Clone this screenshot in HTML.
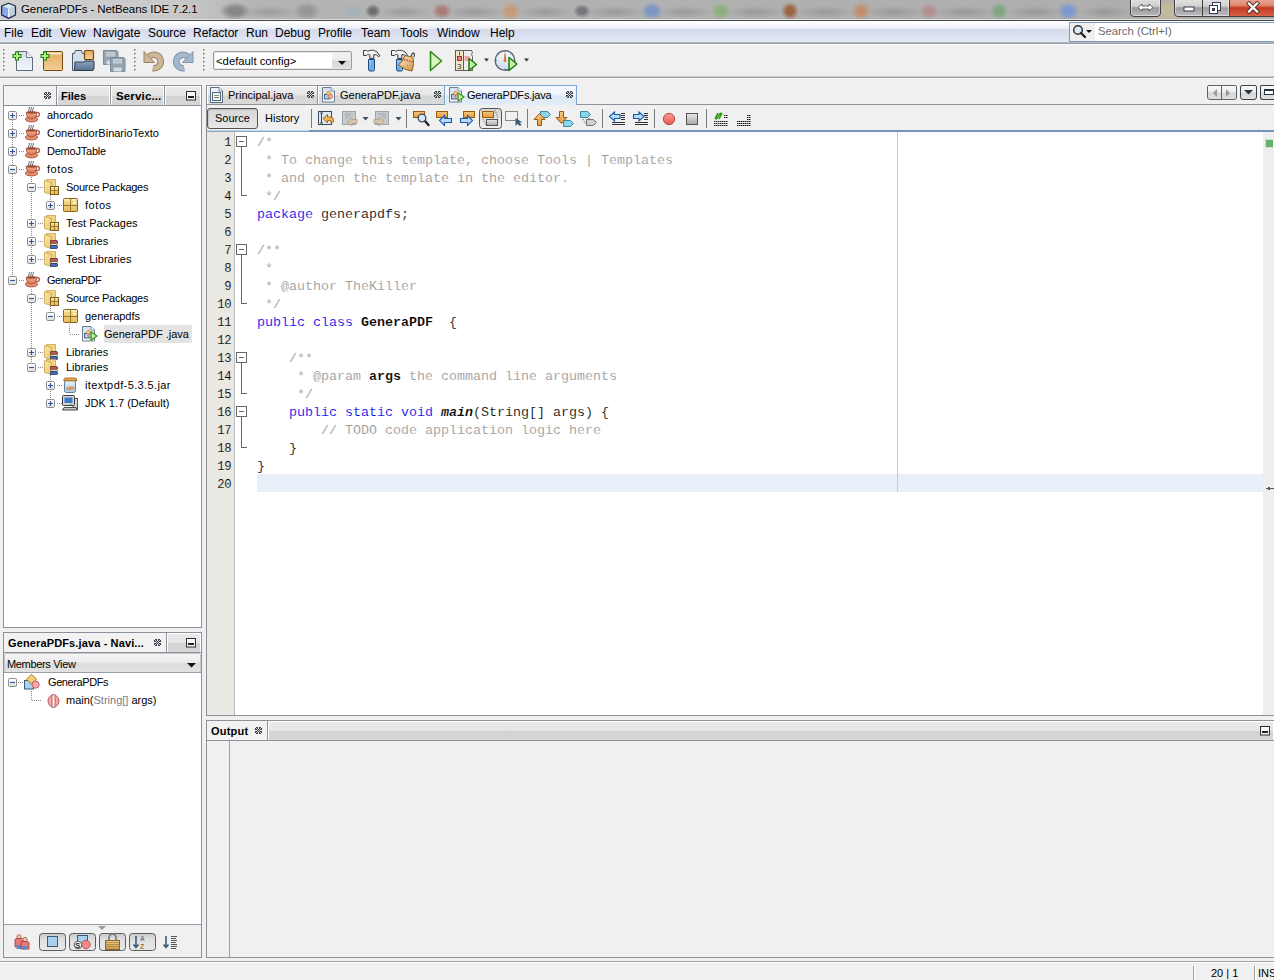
<!DOCTYPE html>
<html><head><meta charset="utf-8">
<style>
*{margin:0;padding:0;box-sizing:border-box}
html,body{width:1274px;height:980px;overflow:hidden;background:#f0f0f0;font-family:"Liberation Sans",sans-serif;font-size:11px;color:#000}
.a{position:absolute}
.t{position:absolute;white-space:nowrap;line-height:1}
#title{left:0;top:0;width:1274px;height:19px;background:radial-gradient(ellipse 16px 9px at 235px 11px,#878787 40%,transparent),radial-gradient(ellipse 14px 9px at 307px 11px,#979797 40%,transparent),radial-gradient(ellipse 12px 8px at 353px 11px,#a6b2ba 40%,transparent),radial-gradient(ellipse 8px 7px at 373px 11px,#6e6e6e 40%,transparent),radial-gradient(ellipse 10px 8px at 442px 11px,#a87e76 40%,transparent),radial-gradient(ellipse 10px 9px at 511px 11px,#c89c78 40%,transparent),radial-gradient(ellipse 9px 7px at 582px 11px,#76767e 40%,transparent),radial-gradient(ellipse 11px 9px at 652px 11px,#7d95c2 40%,transparent),radial-gradient(ellipse 10px 9px at 721px 11px,#8fb07c 40%,transparent),radial-gradient(ellipse 9px 9px at 790px 11px,#9c6444 40%,transparent),radial-gradient(ellipse 10px 9px at 861px 11px,#c09070 40%,transparent),radial-gradient(ellipse 10px 8px at 929px 11px,#b39090 40%,transparent),radial-gradient(ellipse 9px 9px at 999px 11px,#80a880 40%,transparent),radial-gradient(ellipse 11px 9px at 1068px 11px,#7d98d0 40%,transparent),radial-gradient(ellipse 22px 12px at 1167px 11px,#c4b8a0 40%,transparent),radial-gradient(ellipse 30px 6px at 270px 12px,rgba(110,110,110,.35),transparent),radial-gradient(ellipse 25px 6px at 405px 12px,rgba(110,110,110,.35),transparent),radial-gradient(ellipse 30px 6px at 475px 12px,rgba(110,110,110,.35),transparent),radial-gradient(ellipse 28px 6px at 545px 12px,rgba(110,110,110,.35),transparent),radial-gradient(ellipse 30px 6px at 615px 12px,rgba(110,110,110,.35),transparent),radial-gradient(ellipse 28px 6px at 685px 12px,rgba(110,110,110,.35),transparent),radial-gradient(ellipse 30px 6px at 755px 12px,rgba(110,110,110,.35),transparent),radial-gradient(ellipse 30px 6px at 825px 12px,rgba(110,110,110,.35),transparent),radial-gradient(ellipse 30px 6px at 895px 12px,rgba(110,110,110,.35),transparent),radial-gradient(ellipse 30px 6px at 965px 12px,rgba(110,110,110,.35),transparent),radial-gradient(ellipse 28px 6px at 1035px 12px,rgba(110,110,110,.35),transparent),radial-gradient(ellipse 25px 6px at 1105px 12px,rgba(110,110,110,.35),transparent),linear-gradient(90deg,#d0d0d0 0%,#c8c8c8 14%,#b4b4b4 20%,#b0b0b0 60%,#aeaeae 85%,#b2aea8 100%)}
#menubar{left:0;top:21px;width:1274px;height:21px;background:linear-gradient(#ffffff 0px,#fafbfd 3px,#e9ecf6 8px,#d5dbed 8px,#dae0f0 14px,#e3e8f6 21px)}
.mi{position:absolute;top:26px;font-size:12px;line-height:14px;white-space:nowrap}
.border{position:absolute;border:1px solid #8c919c}
.tabg{background:linear-gradient(#ebebeb 0px,#e4e4e4 10px,#d3d3d3 10px,#d6d6d6 19px);box-shadow:inset 1px 1px 0 #fff,inset -1px 0 0 #fff}
.code{position:absolute;font-family:"Liberation Mono",monospace;font-size:13.33px;line-height:18px;white-space:pre;-webkit-text-stroke:0.15px #fff}
.ln{position:absolute;font-family:"Liberation Mono",monospace;font-size:12.2px;letter-spacing:-0.32px;line-height:18px;text-align:right;width:24.3px;left:207px;-webkit-text-stroke:0.12px #e9e8e2}
.cm{color:#969696}
.kw{color:#0000e6}
.tree{position:absolute;font-size:11px;line-height:13px;white-space:nowrap}
</style></head><body>
<svg width="0" height="0" style="position:absolute">
<defs>
<linearGradient id="gCup" x1="0" y1="0" x2="0" y2="1"><stop offset="0" stop-color="#f6b49a"/><stop offset="1" stop-color="#d9704f"/></linearGradient>
<linearGradient id="gFold" x1="0" y1="0" x2="1" y2="1"><stop offset="0" stop-color="#fbe9a6"/><stop offset="1" stop-color="#e9c66e"/></linearGradient>
<linearGradient id="gPkg" x1="0" y1="0" x2="0" y2="1"><stop offset="0" stop-color="#f7dc92"/><stop offset="1" stop-color="#e6bd5c"/></linearGradient>
<linearGradient id="gPage" x1="0" y1="0" x2="0" y2="1"><stop offset="0" stop-color="#d3deea"/><stop offset="1" stop-color="#f6f9fc"/></linearGradient>
<linearGradient id="gExp" x1="0" y1="0" x2="0" y2="1"><stop offset="0" stop-color="#ffffff"/><stop offset="0.5" stop-color="#f4f4f4"/><stop offset="1" stop-color="#dcdcdc"/></linearGradient>
<linearGradient id="gJar" x1="0" y1="0" x2="0" y2="1"><stop offset="0" stop-color="#eaf3fb"/><stop offset="1" stop-color="#a9c6e4"/></linearGradient>
<symbol id="cup" viewBox="0 0 16 16">
 <path d="M3.8 6q-0.8-1.5 0-3t0.4-3M5.8 6q-0.8-1.5 0-3t0.4-3M7.8 5.5q-0.8-1.5 0-3t0.6-2.5" stroke="#6a6a6a" stroke-width="1" fill="none"/>
 <ellipse cx="6.5" cy="12.3" rx="6.2" ry="2.6" fill="#e7906f" stroke="#a4533a" stroke-width="0.9"/>
 <circle cx="12.3" cy="7.6" r="2.1" fill="none" stroke="#b45d40" stroke-width="1.3"/>
 <path d="M1.2 5.2 Q1.5 11.8 6.5 12 Q11.5 11.8 11.8 5.2 Z" fill="url(#gCup)" stroke="#a4533a" stroke-width="0.9"/>
 <ellipse cx="6.5" cy="5.5" rx="4.8" ry="1.3" fill="#9e4f36"/>
</symbol>
<symbol id="fpkg" viewBox="0 0 16 16">
 <path d="M2.5 0.5h9v12h-9z" fill="#f0d482" stroke="#c9a24e" stroke-width="0.8"/>
 <path d="M0.5 1.5l7 2v12l-7-2z" fill="url(#gFold)" stroke="#c9a24e" stroke-width="0.8"/>
 <rect x="6.5" y="7.5" width="8" height="8" fill="url(#gPkg)" stroke="#7d6020" stroke-width="1"/>
 <path d="M10.5 7.5v8M6.5 11.5h8" stroke="#8a6a24" stroke-width="0.8"/>
 <path d="M7.5 8.5h2M11.5 8.5h2" stroke="#fff3c8" stroke-width="1"/>
</symbol>
<symbol id="flib" viewBox="0 0 16 16">
 <path d="M2.5 0.5h9v12h-9z" fill="#f0d482" stroke="#c9a24e" stroke-width="0.8"/>
 <path d="M0.5 1.5l7 2v12l-7-2z" fill="url(#gFold)" stroke="#c9a24e" stroke-width="0.8"/>
 <path d="M6.5 7.5h6.5q1.5 1.5 0 3h-6.5z" fill="#b65a5a" stroke="#6c2a2a" stroke-width="0.8"/>
 <path d="M7 10.5h6q1 1 0 2h-6z" fill="#efe3c2" stroke="#6b5a2a" stroke-width="0.7"/>
 <path d="M6.5 12.5h6.5q1.5 1.5 0 3h-6.5z" fill="#4a6cb4" stroke="#23386c" stroke-width="0.8"/>
</symbol>
<symbol id="pkg" viewBox="0 0 16 16">
 <rect x="0.5" y="1.5" width="14" height="13" rx="1" fill="url(#gPkg)" stroke="#84661f" stroke-width="1"/>
 <path d="M7.5 1.5v13M0.5 8.5h14" stroke="#8f7128" stroke-width="0.9"/>
 <path d="M1.5 2.8h5M8.5 2.8h5" stroke="#fff6d6" stroke-width="1.3"/>
 <rect x="10" y="5" width="3" height="1.6" fill="#fff8e0"/>
</symbol>
<symbol id="exp" viewBox="0 0 9 9">
 <rect x="0.5" y="0.5" width="8" height="8" rx="1.2" fill="url(#gExp)" stroke="#8c8c8c" stroke-width="1"/>
 <path d="M2 4.5h5" stroke="#3553a0" stroke-width="1.2"/>
</symbol>
<symbol id="expp" viewBox="0 0 9 9">
 <rect x="0.5" y="0.5" width="8" height="8" rx="1.2" fill="url(#gExp)" stroke="#8c8c8c" stroke-width="1"/>
 <path d="M2 4.5h5M4.5 2v5" stroke="#3553a0" stroke-width="1.2"/>
</symbol>
<symbol id="jfile" viewBox="0 0 16 16">
 <path d="M0.5 0.5h8.5l3.5 3.5v11h-12z" fill="url(#gPage)" stroke="#6e7e90" stroke-width="1"/>
 <path d="M9 0.5v3.5h3.5" fill="#fff" stroke="#6e7e90" stroke-width="0.8"/>
 <rect x="2.5" y="7.5" width="5" height="4.5" fill="#a8d0f0" stroke="#3e5f80" stroke-width="0.9"/>
 <path d="M6.5 4l2.5 2.5-2.5 2.5-2.5-2.5z" fill="#f3c878" stroke="#b8780c" stroke-width="0.8"/>
 <circle cx="8.3" cy="9.5" r="2.2" fill="#f6a8a8" stroke="#b55858" stroke-width="0.7"/>
</symbol>
<symbol id="run" viewBox="0 0 8 10">
 <path d="M1 0.8l6 4.2-6 4.2z" fill="#bff0a8" stroke="#3a9a20" stroke-width="1.3" stroke-linejoin="round"/>
</symbol>
<symbol id="close" viewBox="0 0 7 7" shape-rendering="crispEdges"><rect x="1" y="0" width="1" height="1" fill="#3c414a"/><rect x="2" y="0" width="1" height="1" fill="#3c414a"/><rect x="4" y="0" width="1" height="1" fill="#3c414a"/><rect x="5" y="0" width="1" height="1" fill="#3c414a"/><rect x="0" y="1" width="1" height="1" fill="#3c414a"/><rect x="2" y="1" width="1" height="1" fill="#3c414a"/><rect x="4" y="1" width="1" height="1" fill="#3c414a"/><rect x="6" y="1" width="1" height="1" fill="#3c414a"/><rect x="0" y="2" width="1" height="1" fill="#3c414a"/><rect x="1" y="2" width="1" height="1" fill="#3c414a"/><rect x="3" y="2" width="1" height="1" fill="#3c414a"/><rect x="5" y="2" width="1" height="1" fill="#3c414a"/><rect x="6" y="2" width="1" height="1" fill="#3c414a"/><rect x="2" y="3" width="1" height="1" fill="#3c414a"/><rect x="4" y="3" width="1" height="1" fill="#3c414a"/><rect x="0" y="4" width="1" height="1" fill="#3c414a"/><rect x="1" y="4" width="1" height="1" fill="#3c414a"/><rect x="3" y="4" width="1" height="1" fill="#3c414a"/><rect x="5" y="4" width="1" height="1" fill="#3c414a"/><rect x="6" y="4" width="1" height="1" fill="#3c414a"/><rect x="0" y="5" width="1" height="1" fill="#3c414a"/><rect x="2" y="5" width="1" height="1" fill="#3c414a"/><rect x="4" y="5" width="1" height="1" fill="#3c414a"/><rect x="6" y="5" width="1" height="1" fill="#3c414a"/><rect x="1" y="6" width="1" height="1" fill="#3c414a"/><rect x="2" y="6" width="1" height="1" fill="#3c414a"/><rect x="4" y="6" width="1" height="1" fill="#3c414a"/><rect x="5" y="6" width="1" height="1" fill="#3c414a"/><rect x="1" y="1" width="1" height="1" fill="#c4c9ce"/><rect x="5" y="1" width="1" height="1" fill="#c4c9ce"/><rect x="2" y="2" width="1" height="1" fill="#c4c9ce"/><rect x="4" y="2" width="1" height="1" fill="#c4c9ce"/><rect x="3" y="3" width="1" height="1" fill="#c4c9ce"/><rect x="2" y="4" width="1" height="1" fill="#c4c9ce"/><rect x="4" y="4" width="1" height="1" fill="#c4c9ce"/><rect x="1" y="5" width="1" height="1" fill="#c4c9ce"/><rect x="5" y="5" width="1" height="1" fill="#c4c9ce"/></symbol>
<symbol id="mini" viewBox="0 0 10 10"><rect x="0.5" y="0.5" width="9" height="8.5" fill="#f6f6f6" stroke="#2f2f2f" stroke-width="1"/><rect x="2" y="5" width="6" height="2" fill="#222"/></symbol>
</defs></svg>
<svg width="0" height="0" style="position:absolute"><defs>
<symbol id="jar" viewBox="0 0 16 16">
 <rect x="1.5" y="3.5" width="11" height="12" rx="2" fill="url(#gJar)" stroke="#5a7aa4" stroke-width="1"/>
 <path d="M0.8 3.8q0-2.8 2-2.8h9q2 0 2 2.8z" fill="#e8a850" stroke="#9a6420" stroke-width="0.9"/>
 <ellipse cx="5.5" cy="11.5" rx="2" ry="1.3" fill="#f0a868" stroke="#c07030" stroke-width="0.6"/>
 <ellipse cx="9" cy="11" rx="2" ry="1.3" fill="#f0a868" stroke="#c07030" stroke-width="0.6"/>
</symbol>
<symbol id="jdk" viewBox="0 0 16 16">
 <rect x="11" y="3.5" width="4.5" height="11" fill="#d8d8d8" stroke="#444" stroke-width="0.9"/>
 <rect x="0.5" y="0.5" width="12" height="10" rx="1" fill="#d6d6d6" stroke="#3a3a3a" stroke-width="1"/>
 <rect x="2.5" y="2.5" width="8" height="5.5" fill="#3a78c8"/>
 <rect x="8" y="9" width="1.5" height="1.2" fill="#2ac02a"/>
 <path d="M2 12.5h12l1.5 2.5h-15z" fill="#c8c8c8" stroke="#3a3a3a" stroke-width="0.9"/>
</symbol>
</defs></svg>

<!-- title bar -->
<div id="title" class="a"></div>
<div class="a" style="left:0;top:19px;width:1274px;height:1px;background:#dedede"></div>
<div class="a" style="left:0;top:20px;width:1274px;height:1px;background:#474747"></div>
<div class="t" style="left:21px;top:4px;font-size:11.5px;color:#000;letter-spacing:-0.08px;text-shadow:0 0 5px rgba(255,255,255,.5)">GeneraPDFs - NetBeans IDE 7.2.1</div>

<!-- menubar -->
<div id="menubar" class="a"></div>
<div class="a" style="left:0;top:42px;width:1274px;height:1px;background:#b4b8c4"></div>
<div class="a" style="left:0;top:43px;width:1274px;height:1px;background:#9c9ea4"></div>
<div class="a" style="left:0;top:44px;width:1274px;height:1px;background:#fdfdfd"></div>
<span class="mi" style="left:4px">File</span>
<span class="mi" style="left:31px">Edit</span>
<span class="mi" style="left:60px">View</span>
<span class="mi" style="left:93px">Navigate</span>
<span class="mi" style="left:148px">Source</span>
<span class="mi" style="left:193px">Refactor</span>
<span class="mi" style="left:246px">Run</span>
<span class="mi" style="left:275px">Debug</span>
<span class="mi" style="left:318px">Profile</span>
<span class="mi" style="left:361px">Team</span>
<span class="mi" style="left:400px">Tools</span>
<span class="mi" style="left:437px">Window</span>
<span class="mi" style="left:490px">Help</span>

<!-- toolbar -->
<div class="a" style="left:0;top:76px;width:1274px;height:1px;background:#cbcbcb"></div>
<div class="a" style="left:0;top:77px;width:1274px;height:1px;background:#a3a3a3"></div>
<div class="a" style="left:0;top:78px;width:1274px;height:1px;background:#f7f7f7"></div>

<!-- projects panel -->
<div class="border" style="left:3px;top:85px;width:199px;height:543px;background:#fff"></div>
<div class="a" style="left:4px;top:86px;width:52px;height:19px;background:#f2f2f2"></div>
<div class="a tabg" style="left:57px;top:86px;width:53px;height:19px"></div>
<div class="a tabg" style="left:111px;top:86px;width:53px;height:19px"></div>
<div class="a tabg" style="left:165px;top:86px;width:36px;height:19px"></div>
<div class="a" style="left:56px;top:86px;width:1px;height:19px;background:#8c919c"></div>
<div class="a" style="left:110px;top:86px;width:1px;height:19px;background:#8c919c"></div>
<div class="a" style="left:164px;top:86px;width:1px;height:19px;background:#8c919c"></div>
<div class="a" style="left:4px;top:105px;width:197px;height:1px;background:#8c919c"></div>
<div class="t" style="left:61px;top:91px;font-size:11px;font-weight:bold">Files</div>
<div class="t" style="left:116px;top:91px;font-size:11.5px;font-weight:bold;letter-spacing:0.15px">Servic...</div>

<div class="a" style="left:12px;top:120px;width:1px;height:156px;background:repeating-linear-gradient(180deg,#8a8a8a 0 1px,transparent 1px 2px)"></div>
<div class="a" style="left:31px;top:177px;width:1px;height:78px;background:repeating-linear-gradient(180deg,#8a8a8a 0 1px,transparent 1px 2px)"></div>
<div class="a" style="left:50px;top:195px;width:1px;height:6px;background:repeating-linear-gradient(180deg,#8a8a8a 0 1px,transparent 1px 2px)"></div>
<div class="a" style="left:31px;top:289px;width:1px;height:74px;background:repeating-linear-gradient(180deg,#8a8a8a 0 1px,transparent 1px 2px)"></div>
<div class="a" style="left:50px;top:306px;width:1px;height:6px;background:repeating-linear-gradient(180deg,#8a8a8a 0 1px,transparent 1px 2px)"></div>
<div class="a" style="left:69px;top:324px;width:1px;height:10px;background:repeating-linear-gradient(180deg,#8a8a8a 0 1px,transparent 1px 2px)"></div>
<div class="a" style="left:70px;top:334px;width:10px;height:1px;background:repeating-linear-gradient(90deg,#8a8a8a 0 1px,transparent 1px 2px)"></div>
<div class="a" style="left:50px;top:375px;width:1px;height:24px;background:repeating-linear-gradient(180deg,#8a8a8a 0 1px,transparent 1px 2px)"></div>
<div class="a" style="left:104px;top:325px;width:88px;height:18px;background:#e3e3e3"></div>
<svg class="a" style="left:8px;top:111px" width="9" height="9"><use href="#expp"/></svg>
<div class="a" style="left:19px;top:115px;width:5px;height:1px;background:repeating-linear-gradient(90deg,#8a8a8a 0 1px,transparent 1px 2px)"></div>
<svg class="a" style="left:25px;top:107px" width="16" height="16"><use href="#cup"/></svg>
<div class="t" style="left:47px;top:110px;font-size:11px;letter-spacing:0px">ahorcado</div>
<svg class="a" style="left:8px;top:129px" width="9" height="9"><use href="#expp"/></svg>
<div class="a" style="left:19px;top:133px;width:5px;height:1px;background:repeating-linear-gradient(90deg,#8a8a8a 0 1px,transparent 1px 2px)"></div>
<svg class="a" style="left:25px;top:125px" width="16" height="16"><use href="#cup"/></svg>
<div class="t" style="left:47px;top:128px;font-size:11px;letter-spacing:0px">ConertidorBinarioTexto</div>
<svg class="a" style="left:8px;top:147px" width="9" height="9"><use href="#expp"/></svg>
<div class="a" style="left:19px;top:151px;width:5px;height:1px;background:repeating-linear-gradient(90deg,#8a8a8a 0 1px,transparent 1px 2px)"></div>
<svg class="a" style="left:25px;top:143px" width="16" height="16"><use href="#cup"/></svg>
<div class="t" style="left:47px;top:146px;font-size:11px;letter-spacing:-0.22px">DemoJTable</div>
<svg class="a" style="left:8px;top:165px" width="9" height="9"><use href="#exp"/></svg>
<div class="a" style="left:19px;top:169px;width:5px;height:1px;background:repeating-linear-gradient(90deg,#8a8a8a 0 1px,transparent 1px 2px)"></div>
<svg class="a" style="left:25px;top:161px" width="16" height="16"><use href="#cup"/></svg>
<div class="t" style="left:47px;top:164px;font-size:11px;letter-spacing:0.55px">fotos</div>
<svg class="a" style="left:27px;top:183px" width="9" height="9"><use href="#exp"/></svg>
<div class="a" style="left:38px;top:187px;width:5px;height:1px;background:repeating-linear-gradient(90deg,#8a8a8a 0 1px,transparent 1px 2px)"></div>
<svg class="a" style="left:44px;top:179px" width="16" height="16"><use href="#fpkg"/></svg>
<div class="t" style="left:66px;top:182px;font-size:11px;letter-spacing:-0.27px">Source Packages</div>
<svg class="a" style="left:46px;top:201px" width="9" height="9"><use href="#expp"/></svg>
<div class="a" style="left:57px;top:205px;width:5px;height:1px;background:repeating-linear-gradient(90deg,#8a8a8a 0 1px,transparent 1px 2px)"></div>
<svg class="a" style="left:63px;top:197px" width="16" height="16"><use href="#pkg"/></svg>
<div class="t" style="left:85px;top:200px;font-size:11px;letter-spacing:0.55px">fotos</div>
<svg class="a" style="left:27px;top:219px" width="9" height="9"><use href="#expp"/></svg>
<div class="a" style="left:38px;top:223px;width:5px;height:1px;background:repeating-linear-gradient(90deg,#8a8a8a 0 1px,transparent 1px 2px)"></div>
<svg class="a" style="left:44px;top:215px" width="16" height="16"><use href="#fpkg"/></svg>
<div class="t" style="left:66px;top:218px;font-size:11px;letter-spacing:0px">Test Packages</div>
<svg class="a" style="left:27px;top:237px" width="9" height="9"><use href="#expp"/></svg>
<div class="a" style="left:38px;top:241px;width:5px;height:1px;background:repeating-linear-gradient(90deg,#8a8a8a 0 1px,transparent 1px 2px)"></div>
<svg class="a" style="left:44px;top:233px" width="16" height="16"><use href="#flib"/></svg>
<div class="t" style="left:66px;top:236px;font-size:11px;letter-spacing:0px">Libraries</div>
<svg class="a" style="left:27px;top:255px" width="9" height="9"><use href="#expp"/></svg>
<div class="a" style="left:38px;top:259px;width:5px;height:1px;background:repeating-linear-gradient(90deg,#8a8a8a 0 1px,transparent 1px 2px)"></div>
<svg class="a" style="left:44px;top:251px" width="16" height="16"><use href="#flib"/></svg>
<div class="t" style="left:66px;top:254px;font-size:11px;letter-spacing:0px">Test Libraries</div>
<svg class="a" style="left:8px;top:276px" width="9" height="9"><use href="#exp"/></svg>
<div class="a" style="left:19px;top:280px;width:5px;height:1px;background:repeating-linear-gradient(90deg,#8a8a8a 0 1px,transparent 1px 2px)"></div>
<svg class="a" style="left:25px;top:272px" width="16" height="16"><use href="#cup"/></svg>
<div class="t" style="left:47px;top:275px;font-size:11px;letter-spacing:-0.5px">GeneraPDF</div>
<svg class="a" style="left:27px;top:294px" width="9" height="9"><use href="#exp"/></svg>
<div class="a" style="left:38px;top:298px;width:5px;height:1px;background:repeating-linear-gradient(90deg,#8a8a8a 0 1px,transparent 1px 2px)"></div>
<svg class="a" style="left:44px;top:290px" width="16" height="16"><use href="#fpkg"/></svg>
<div class="t" style="left:66px;top:293px;font-size:11px;letter-spacing:-0.27px">Source Packages</div>
<svg class="a" style="left:46px;top:312px" width="9" height="9"><use href="#exp"/></svg>
<div class="a" style="left:57px;top:316px;width:5px;height:1px;background:repeating-linear-gradient(90deg,#8a8a8a 0 1px,transparent 1px 2px)"></div>
<svg class="a" style="left:63px;top:308px" width="16" height="16"><use href="#pkg"/></svg>
<div class="t" style="left:85px;top:311px;font-size:11px;letter-spacing:0px">generapdfs</div>
<svg class="a" style="left:82px;top:326px" width="16" height="16"><use href="#jfile"/></svg>
<svg class="a" style="left:90px;top:331px" width="8" height="10"><use href="#run"/></svg>
<div class="t" style="left:104px;top:329px;font-size:11px;letter-spacing:0px">GeneraPDF .java</div>
<svg class="a" style="left:27px;top:348px" width="9" height="9"><use href="#expp"/></svg>
<div class="a" style="left:38px;top:352px;width:5px;height:1px;background:repeating-linear-gradient(90deg,#8a8a8a 0 1px,transparent 1px 2px)"></div>
<svg class="a" style="left:44px;top:344px" width="16" height="16"><use href="#flib"/></svg>
<div class="t" style="left:66px;top:347px;font-size:11px;letter-spacing:0px">Libraries</div>
<svg class="a" style="left:27px;top:363px" width="9" height="9"><use href="#exp"/></svg>
<div class="a" style="left:38px;top:367px;width:5px;height:1px;background:repeating-linear-gradient(90deg,#8a8a8a 0 1px,transparent 1px 2px)"></div>
<svg class="a" style="left:44px;top:359px" width="16" height="16"><use href="#flib"/></svg>
<div class="t" style="left:66px;top:362px;font-size:11px;letter-spacing:0px">Libraries</div>
<svg class="a" style="left:46px;top:381px" width="9" height="9"><use href="#expp"/></svg>
<div class="a" style="left:57px;top:385px;width:5px;height:1px;background:repeating-linear-gradient(90deg,#8a8a8a 0 1px,transparent 1px 2px)"></div>
<svg class="a" style="left:63px;top:377px" width="16" height="16"><use href="#jar"/></svg>
<div class="t" style="left:85px;top:380px;font-size:11px;letter-spacing:0.39px">itextpdf-5.3.5.jar</div>
<svg class="a" style="left:46px;top:399px" width="9" height="9"><use href="#expp"/></svg>
<div class="a" style="left:57px;top:403px;width:5px;height:1px;background:repeating-linear-gradient(90deg,#8a8a8a 0 1px,transparent 1px 2px)"></div>
<svg class="a" style="left:62px;top:395px" width="16" height="16"><use href="#jdk"/></svg>
<div class="t" style="left:85px;top:398px;font-size:11px;letter-spacing:0px">JDK 1.7 (Default)</div>
<!-- navigator panel -->
<div class="border" style="left:3px;top:632px;width:199px;height:326px;background:#fff"></div>
<div class="a" style="left:4px;top:633px;width:162px;height:19px;background:#f2f2f2"></div>
<div class="a tabg" style="left:167px;top:633px;width:34px;height:19px"></div>
<div class="a" style="left:166px;top:633px;width:1px;height:19px;background:#8c919c"></div>
<div class="a" style="left:4px;top:652px;width:197px;height:1px;background:#8c919c"></div>
<div class="t" style="left:8px;top:638px;font-size:11px;font-weight:bold;letter-spacing:0.13px">GeneraPDFs.java - Navi...</div>
<div class="a" style="left:4px;top:653px;width:197px;height:20px;border:1px solid #c8c8c8;border-radius:2px;background:linear-gradient(#f4f4f4 0%,#ececec 45%,#dcdcdc 55%,#e2e2e2 100%)"></div>
<div class="a" style="left:4px;top:672px;width:197px;height:1px;background:#9a9ea8"></div>
<div class="t" style="left:7px;top:659px;font-size:11px;letter-spacing:-0.33px">Members View</div>
<div class="a" style="left:4px;top:924px;width:197px;height:1px;background:#9a9ea8"></div>
<div class="a" style="left:4px;top:925px;width:197px;height:32px;background:#f0f0f0"></div>

<!-- editor -->
<div class="border" style="left:206px;top:85px;width:1070px;height:631px;background:#f0f0f0;border-top-color:transparent"></div>
<div class="a" style="left:207px;top:104px;width:1067px;height:1px;background:#8c919c"></div>
<div class="a" style="left:309px;top:130px;width:965px;height:2px;background:#7394b8"></div><div class="a" style="left:207px;top:130px;width:102px;height:1px;background:#c8d6e6"></div><div class="a" style="left:207px;top:131px;width:102px;height:1px;background:#86a6c8"></div>
<div class="a" style="left:207px;top:132px;width:27px;height:583px;background:#e9e8e2"></div>
<div class="a" style="left:234px;top:132px;width:1px;height:583px;background:#bababa"></div>
<div class="a" style="left:235px;top:132px;width:1028px;height:583px;background:#fff"></div>
<div class="a" style="left:1263px;top:132px;width:11px;height:583px;background:#eeeeee"></div>
<div class="a" style="left:257px;top:474px;width:1006px;height:18px;background:#e9eff8"></div>
<div class="a" style="left:897px;top:132px;width:1px;height:360px;background:#ffb4b4"></div>
<div class="a" style="left:1265px;top:139px;width:9px;height:9px;background:#fff;border:1px solid #e0d8d0;border-right:none"></div><div class="a" style="left:1266px;top:140px;width:7px;height:7px;background:#63b468"></div>

<div class="code" style="left:257px;top:134px"><span class="cm">/*</span>
<span class="cm"> * To change this template, choose Tools | Templates</span>
<span class="cm"> * and open the template in the editor.</span>
<span class="cm"> */</span>
<span class="kw">package</span> generapdfs;

<span class="cm">/**</span>
<span class="cm"> *</span>
<span class="cm"> * @author TheKiller</span>
<span class="cm"> */</span>
<span class="kw">public</span> <span class="kw">class</span> <b>GeneraPDF</b>  {

<span class="cm">    /**</span>
<span class="cm">     * @param </span><b>args</b><span class="cm"> the command line arguments</span>
<span class="cm">     */</span>
    <span class="kw">public</span> <span class="kw">static</span> <span class="kw">void</span> <b><i>main</i></b>(String[] args) {
<span class="cm">        // TODO code application logic here</span>
    }
}
</div>
<div class="ln" style="top:134px">1<br>2<br>3<br>4<br>5<br>6<br>7<br>8<br>9<br>10<br>11<br>12<br>13<br>14<br>15<br>16<br>17<br>18<br>19<br>20</div>
<div class="a" style="left:236px;top:136px;width:11px;height:11px;border:1px solid #666;background:#fff"></div><div class="a" style="left:239px;top:141px;width:5px;height:1px;background:#666"></div><div class="a" style="left:241px;top:147px;width:1px;height:49px;background:#666"></div><div class="a" style="left:241px;top:195px;width:6px;height:1px;background:#666"></div>
<div class="a" style="left:236px;top:244px;width:11px;height:11px;border:1px solid #666;background:#fff"></div><div class="a" style="left:239px;top:249px;width:5px;height:1px;background:#666"></div><div class="a" style="left:241px;top:255px;width:1px;height:49px;background:#666"></div><div class="a" style="left:241px;top:303px;width:6px;height:1px;background:#666"></div>
<div class="a" style="left:236px;top:352px;width:11px;height:11px;border:1px solid #666;background:#fff"></div><div class="a" style="left:239px;top:357px;width:5px;height:1px;background:#666"></div><div class="a" style="left:241px;top:363px;width:1px;height:31px;background:#666"></div><div class="a" style="left:241px;top:393px;width:6px;height:1px;background:#666"></div>
<div class="a" style="left:236px;top:406px;width:11px;height:11px;border:1px solid #666;background:#fff"></div><div class="a" style="left:239px;top:411px;width:5px;height:1px;background:#666"></div><div class="a" style="left:241px;top:417px;width:1px;height:31px;background:#666"></div><div class="a" style="left:241px;top:447px;width:6px;height:1px;background:#666"></div>
<!-- editor tabs -->
<div class="a" style="left:206px;top:85px;width:1px;height:1px;background:#8c919c"></div><div class="a" style="left:207px;top:85px;width:237px;height:1px;background:#8c919c"></div>
<div class="a" style="left:207px;top:86px;width:110px;height:18px;background:linear-gradient(#eeeeee 0%,#e6e6e6 45%,#d6d6d6 55%,#dadada 100%);border-top:1px solid #fff;border-left:1px solid #fff"></div>
<div class="a" style="left:317px;top:86px;width:1px;height:18px;background:#8c919c"></div>
<div class="a" style="left:318px;top:86px;width:126px;height:18px;background:linear-gradient(#eeeeee 0%,#e6e6e6 45%,#d6d6d6 55%,#dadada 100%);border-top:1px solid #fff;border-left:1px solid #fff"></div>
<div class="a" style="left:444px;top:85px;width:133px;height:20px;border:1px solid #7ea4d1;border-bottom:none;background:linear-gradient(#f6f9fd 0%,#eef4fa 45%,#dce9f6 55%,#e2edf8 100%)"></div>
<div class="t" style="left:228px;top:90px;font-size:11px">Principal.java</div>
<div class="t" style="left:340px;top:90px;font-size:11px">GeneraPDF.java</div>
<div class="t" style="left:467px;top:90px;font-size:11px;letter-spacing:-0.2px">GeneraPDFs.java</div>
<!-- editor toolbar -->
<div class="a" style="left:207px;top:108px;width:51px;height:21px;border:1px solid #555;border-radius:3px;background:linear-gradient(#d6d6d6,#e8e8e8);box-shadow:inset 1px 1px 1px rgba(0,0,0,.12)"></div>
<div class="t" style="left:215px;top:113px;font-size:11px">Source</div>
<div class="t" style="left:265px;top:113px;font-size:11px">History</div>
<!-- output -->
<div class="border" style="left:206px;top:720px;width:1070px;height:238px;background:#f0f0f0"></div>
<div class="a" style="left:207px;top:721px;width:60px;height:19px;background:#f2f2f2"></div>
<div class="a tabg" style="left:268px;top:721px;width:1006px;height:19px"></div>
<div class="a" style="left:267px;top:721px;width:1px;height:19px;background:#8c919c"></div>
<div class="a" style="left:207px;top:740px;width:1067px;height:1px;background:#8c919c"></div>
<div class="a" style="left:229px;top:741px;width:1px;height:216px;background:#a0a0a0"></div>
<div class="t" style="left:211px;top:726px;font-size:11px;font-weight:bold;letter-spacing:0.2px">Output</div>

<!-- status bar -->
<div class="a" style="left:0;top:961px;width:1274px;height:1px;background:#a0a0a0"></div>
<div class="a" style="left:0;top:962px;width:1274px;height:1px;background:#fff"></div>
<!-- title icon -->
<svg class="a" style="left:0;top:1px" width="18" height="18" viewBox="0 0 18 18">
 <path d="M8.6 7.6L15.5 5L8.6 2.3L1.6 5Z" fill="#d4ece8"/>
 <path d="M1.6 5L8.6 7.6V17.4L1.6 14Z" fill="#8aa6e6"/>
 <path d="M8.6 7.6L15.5 5V14L8.6 17.4Z" fill="#c0d0d8"/>
 <path d="M8.6 7.6V17.4" stroke="#eaf6ff" stroke-width="1.2"/>
 <path d="M8.6 2.3L15.5 5V14L8.6 17.4L1.6 14V5Z" fill="none" stroke="#1c2250" stroke-width="1.2" stroke-linejoin="round"/>
</svg>
<!-- window buttons -->
<div class="a" style="left:1130px;top:-3px;width:31px;height:20px;border:1px solid #404040;border-radius:0 0 4px 4px;background:linear-gradient(#e2e2e2 0%,#cfcfcf 45%,#9a9a9a 55%,#b8b8b8 100%);box-shadow:inset 0 0 0 1px rgba(255,255,255,.45)"></div>
<svg class="a" style="left:1137px;top:3px" width="17" height="9" viewBox="0 0 17 9"><path d="M1 4.5L5 1V3H12V1L16 4.5L12 8V6H5V8Z" fill="#fff" stroke="#444" stroke-width="0.8"/></svg>
<div class="a" style="left:1174px;top:-3px;width:56px;height:20px;border:1px solid #404040;border-radius:0 0 0 4px;background:linear-gradient(#e4e4e4 0%,#d2d2d2 45%,#9e9e9e 55%,#bdbdbd 100%);box-shadow:inset 0 0 0 1px rgba(255,255,255,.45)"></div>
<div class="a" style="left:1202px;top:0;width:1px;height:16px;background:#404040"></div>
<div class="a" style="left:1229px;top:-3px;width:46px;height:20px;border:1px solid #404040;border-right:none;background:linear-gradient(#eaa898 0%,#e08a72 40%,#c43a22 55%,#d86048 100%)"></div>
<svg class="a" style="left:1183px;top:6px" width="12" height="6"><rect x="1" y="1" width="10" height="4" fill="#fff" stroke="#3a3a50" stroke-width="1"/></svg>
<svg class="a" style="left:1208px;top:1px" width="14" height="14"><rect x="4.5" y="1.5" width="8" height="8" fill="#fff" stroke="#3a3a50" stroke-width="1"/><rect x="1.5" y="4.5" width="8" height="8" fill="#fff" stroke="#3a3a50" stroke-width="1"/><rect x="4" y="7" width="3" height="3" fill="#3a3a50"/></svg>
<svg class="a" style="left:1246px;top:1px" width="14" height="13"><path d="M3 2.5L11 10.5M11 2.5L3 10.5" stroke="#4a2a24" stroke-width="4.2" stroke-linecap="square"/><path d="M3 2.5L11 10.5M11 2.5L3 10.5" stroke="#fff" stroke-width="2.4" stroke-linecap="square"/></svg>
<!-- search box -->
<div class="a" style="left:1069px;top:22px;width:206px;height:20px;border:1px solid #7b9cc9;border-right:none;background:#fff"></div>
<div class="a" style="left:1070px;top:23px;width:25px;height:18px;background:#efefef"></div>
<svg class="a" style="left:1072px;top:24px" width="22" height="16"><circle cx="6" cy="6" r="4.3" fill="#dbe8f2" stroke="#333" stroke-width="1.5"/><path d="M9 9L13 13" stroke="#222" stroke-width="2.4" stroke-linecap="round"/><path d="M14 6h6l-3 3z" fill="#111"/></svg>
<div class="t" style="left:1098px;top:26px;font-size:11.3px;color:#6b6b6b">Search (Ctrl+I)</div>
<svg class="a" style="left:0;top:44px" width="540" height="32" viewBox="0 44 540 32">
<defs>
<linearGradient id="tPage" x1="0" y1="0" x2="0" y2="1"><stop offset="0" stop-color="#d5e0ec"/><stop offset="1" stop-color="#f4f7fb"/></linearGradient>
<linearGradient id="tOr" x1="0" y1="0" x2="0" y2="1"><stop offset="0" stop-color="#e8aa5c"/><stop offset="1" stop-color="#f4cf96"/></linearGradient>
<linearGradient id="tBl" x1="0" y1="0" x2="0" y2="1"><stop offset="0" stop-color="#8aa6c0"/><stop offset="1" stop-color="#56728e"/></linearGradient>
<linearGradient id="tHandle" x1="0" y1="0" x2="1" y2="1"><stop offset="0" stop-color="#b4d4f0"/><stop offset="0.6" stop-color="#6aa6dc"/><stop offset="1" stop-color="#8ccaf8"/></linearGradient>
<linearGradient id="tHead" x1="0" y1="0" x2="0" y2="1"><stop offset="0" stop-color="#ffffff"/><stop offset="1" stop-color="#d8dade"/></linearGradient>
<linearGradient id="tBroom" x1="0" y1="0" x2="1" y2="1"><stop offset="0" stop-color="#fbe8c6"/><stop offset="1" stop-color="#d49a50"/></linearGradient>
<linearGradient id="tClock" x1="0" y1="0" x2="0" y2="1"><stop offset="0" stop-color="#f8fbff"/><stop offset="1" stop-color="#c8dcf0"/></linearGradient>
<pattern id="tDots" width="4" height="4" patternUnits="userSpaceOnUse" x="0" y="1"><rect x="0" y="0" width="2" height="2" fill="#8e8e8e"/><rect x="1" y="1" width="1" height="1" fill="#fff"/></pattern>
</defs>
<!-- separators -->
<rect x="3" y="49" width="2" height="2" fill="#8e8e8e"/><rect x="4" y="50" width="1" height="1" fill="#fff"/><rect x="3" y="53" width="2" height="2" fill="#8e8e8e"/><rect x="4" y="54" width="1" height="1" fill="#fff"/><rect x="3" y="57" width="2" height="2" fill="#8e8e8e"/><rect x="4" y="58" width="1" height="1" fill="#fff"/><rect x="3" y="61" width="2" height="2" fill="#8e8e8e"/><rect x="4" y="62" width="1" height="1" fill="#fff"/><rect x="3" y="65" width="2" height="2" fill="#8e8e8e"/><rect x="4" y="66" width="1" height="1" fill="#fff"/><rect x="3" y="69" width="2" height="2" fill="#8e8e8e"/><rect x="4" y="70" width="1" height="1" fill="#fff"/><rect x="134" y="49" width="2" height="2" fill="#8e8e8e"/><rect x="135" y="50" width="1" height="1" fill="#fff"/><rect x="134" y="53" width="2" height="2" fill="#8e8e8e"/><rect x="135" y="54" width="1" height="1" fill="#fff"/><rect x="134" y="57" width="2" height="2" fill="#8e8e8e"/><rect x="135" y="58" width="1" height="1" fill="#fff"/><rect x="134" y="61" width="2" height="2" fill="#8e8e8e"/><rect x="135" y="62" width="1" height="1" fill="#fff"/><rect x="134" y="65" width="2" height="2" fill="#8e8e8e"/><rect x="135" y="66" width="1" height="1" fill="#fff"/><rect x="134" y="69" width="2" height="2" fill="#8e8e8e"/><rect x="135" y="70" width="1" height="1" fill="#fff"/><rect x="203" y="49" width="2" height="2" fill="#8e8e8e"/><rect x="204" y="50" width="1" height="1" fill="#fff"/><rect x="203" y="53" width="2" height="2" fill="#8e8e8e"/><rect x="204" y="54" width="1" height="1" fill="#fff"/><rect x="203" y="57" width="2" height="2" fill="#8e8e8e"/><rect x="204" y="58" width="1" height="1" fill="#fff"/><rect x="203" y="61" width="2" height="2" fill="#8e8e8e"/><rect x="204" y="62" width="1" height="1" fill="#fff"/><rect x="203" y="65" width="2" height="2" fill="#8e8e8e"/><rect x="204" y="66" width="1" height="1" fill="#fff"/><rect x="203" y="69" width="2" height="2" fill="#8e8e8e"/><rect x="204" y="70" width="1" height="1" fill="#fff"/>
<!-- new file -->
<path d="M16.5 51.5h10l6 6v13h-16z" fill="url(#tPage)" stroke="#5d6b7a" stroke-width="1"/>
<path d="M26.5 51.5v6h6" fill="#eef3f8" stroke="#5d6b7a" stroke-width="0.9"/>
<path d="M17 51.5v9M12.5 56h9" stroke="#1d7a10" stroke-width="4"/>
<path d="M17 52.5v7M13.5 56h7" stroke="#aef47a" stroke-width="2"/>
<!-- new project -->
<rect x="43.5" y="51.5" width="19" height="19" rx="1" fill="url(#tOr)" stroke="#6e4a14" stroke-width="1"/>
<rect x="44.5" y="52.5" width="17" height="2" fill="#fbe8c8"/>
<path d="M45 51.5v9M40.5 56h9" stroke="#1d7a10" stroke-width="4"/>
<path d="M45 52.5v7M41.5 56h7" stroke="#aef47a" stroke-width="2"/>
<!-- open project -->
<path d="M72.5 53.5h2l1-3h6l1 3h4v17h-14z" fill="#d6e0ea" stroke="#4a5868" stroke-width="1"/>
<path d="M74.5 70.5l0.5-8.5h9l1-1h9v7.5l-1 2z" fill="url(#tBl)" stroke="#2a3c50" stroke-width="1"/>
<rect x="84.5" y="50.5" width="9" height="9" rx="1" fill="url(#tOr)" stroke="#6e4a14" stroke-width="1.2"/>
<path d="M89.5 59.5v2" stroke="#44505c" stroke-width="1"/>
<!-- save all (disabled) -->
<path d="M103.5 50.5h13l1.5 1.5v12.5h-14.5z" fill="#93a3b2" stroke="#7c8a98" stroke-width="1"/>
<rect x="106" y="52" width="9" height="4.5" fill="#c9d1d9"/>
<path d="M107 53.5h7M107 55h7" stroke="#aab4be" stroke-width="0.6"/>
<rect x="106.5" y="60.5" width="8" height="4" fill="#d6dce2"/>
<path d="M110.5 57.5h13l1.5 1.5v12.5h-14.5z" fill="#93a3b2" stroke="#7c8a98" stroke-width="1"/>
<rect x="113" y="59" width="9" height="4.5" fill="#c9d1d9"/>
<path d="M114 60.5h7M114 62h7" stroke="#aab4be" stroke-width="0.6"/>
<rect x="113.5" y="67.5" width="8" height="4" fill="#d6dce2"/>
<!-- undo -->
<path d="M149.2 56.7A6.75 6.75 0 1 1 152.8 68.15" fill="none" stroke="#9a8468" stroke-width="6.6"/>
<path d="M144 51.5v11h10.5z" fill="#cdb796" stroke="#9a8468" stroke-width="1" stroke-linejoin="round"/>
<path d="M149.2 56.7A6.75 6.75 0 1 1 152.8 68.15" fill="none" stroke="#cdb796" stroke-width="4.6"/>
<path d="M145 53v8.5h7" fill="#cdb796"/>
<!-- redo -->
<path d="M187.8 56.7A6.75 6.75 0 1 0 184.2 68.15" fill="none" stroke="#7f95aa" stroke-width="6.6"/>
<path d="M193 51.5v11h-10.5z" fill="#a5b9cc" stroke="#7f95aa" stroke-width="1" stroke-linejoin="round"/>
<path d="M187.8 56.7A6.75 6.75 0 1 0 184.2 68.15" fill="none" stroke="#a5b9cc" stroke-width="4.6"/>
<path d="M192 53v8.5h-7" fill="#a5b9cc"/>
<!-- hammer -->
<g transform="translate(0,0)">
<path d="M363.5 50.5h3l0.8 0.8q3-1.3 6-1.1q4.2 0.6 6.6 5.6l-1.1 0.9q-2.4-2.6-5-2v3.8h-4v-3.6q-1.2-0.8-2.5-0.3l-0.8 0.9h-3z" fill="url(#tHead)" stroke="#3c3c3c" stroke-width="1"/>
<path d="M368.5 59.5h6v10q0 1.5-1.5 1.5h-3q-1.5 0-1.5-1.5z" fill="url(#tHandle)" stroke="#174a82" stroke-width="1"/>
</g>
<!-- clean build -->
<g transform="translate(28,0)">
<path d="M363.5 50.5h3l0.8 0.8q3-1.3 6-1.1q4.2 0.6 6.6 5.6l-1.1 0.9q-2.4-2.6-5-2v3.8h-4v-3.6q-1.2-0.8-2.5-0.3l-0.8 0.9h-3z" fill="url(#tHead)" stroke="#3c3c3c" stroke-width="1"/>
<path d="M368.5 59.5h6v10q0 1.5-1.5 1.5h-3q-1.5 0-1.5-1.5z" fill="url(#tHandle)" stroke="#174a82" stroke-width="1"/>
</g>
<path d="M411 56.5q1-3.5 2.5-3.5q1.5 0 0.5 4" fill="none" stroke="#555" stroke-width="1.3"/>
<path d="M405 55.5L412.8 57.2Q414.5 63 412 71Q404.5 70.5 398.5 64.8Q402.5 62 405 55.5Z" fill="url(#tBroom)" stroke="#8a5a1a" stroke-width="1"/>
<path d="M404 59.5L413.5 62" stroke="#d0502a" stroke-width="1.6" stroke-dasharray="1.5 1"/>
<path d="M403 65l3 4M407 64l2 6M410 63l1 7" stroke="#c89650" stroke-width="0.7"/>
<!-- run -->
<path d="M430.5 51.5l11 9.5-11 9.5z" fill="#d8f8c0" stroke="#2e8c18" stroke-width="1.6" stroke-linejoin="round"/>
<!-- debug -->
<rect x="455.5" y="50.5" width="8" height="20" fill="#f2e6c6" stroke="#5c5c5c" stroke-width="1"/>
<path d="M463.5 50.5h8l1 2-1 2 1 2v14h-9z" fill="#eceef0" stroke="#5c5c5c" stroke-width="1"/>
<rect x="464.5" y="56" width="5" height="5" fill="#f4a0a0"/>
<rect x="457.5" y="56.5" width="4" height="4" fill="#f08080" stroke="#7a2020" stroke-width="0.8"/>
<path d="M459.5 51.5v4" stroke="#555" stroke-width="1"/>
<text x="457" y="69" font-family="Liberation Sans" font-size="8" fill="#333">3</text>
<path d="M469 58.5l7.5 6-7.5 6z" fill="#c8f4a8" stroke="#1e7a10" stroke-width="1.5" stroke-linejoin="round"/>
<path d="M484 58.5h5l-2.5 3z" fill="#333"/>
<!-- profile -->
<circle cx="505" cy="60.5" r="9.8" fill="url(#tClock)" stroke="#5c6670" stroke-width="1.4"/>
<path d="M504 61.5l1-8 1 8z" fill="#e07020" stroke="#e07020" stroke-width="0.8"/><g stroke="#6a7888" stroke-width="0.8"><path d="M505 51.5v1.2M505 68.3v1.2M496 60.5h1.2M512.8 60.5h1.2M498.6 54.1l0.9 0.9M510.5 66l0.9 0.9M498.6 66.9l0.9-0.9M510.5 55l0.9-0.9"/></g>
<path d="M509 57.5l8 6.5-8 6.5z" fill="#c8f4a8" stroke="#1e7a10" stroke-width="1.5" stroke-linejoin="round"/>
<path d="M524 58.5h5l-2.5 3z" fill="#333"/>
</svg>
<!-- combo -->
<div class="a" style="left:213px;top:51px;width:139px;height:19px;border:1px solid #9a9a9a;border-radius:2px;background:#fff;box-shadow:inset 0 0 0 1px #e8e8e8"></div>
<div class="a" style="left:332px;top:53px;width:18px;height:15px;background:linear-gradient(#f2f2f2 0%,#ececec 45%,#d8d8d8 55%,#e0e0e0 100%)"></div>
<svg class="a" style="left:338px;top:61px" width="8" height="5"><path d="M0 0h8l-4 4z" fill="#111"/></svg>
<div class="t" style="left:216px;top:56px;font-size:11.3px">&lt;default config&gt;</div>
<svg class="a" style="left:300px;top:104px" width="460" height="28" viewBox="300 104 460 28">
<defs>
<linearGradient id="eOr" x1="0" y1="0" x2="0" y2="1"><stop offset="0" stop-color="#f6c684"/><stop offset="1" stop-color="#e49a3c"/></linearGradient>
<linearGradient id="eBtn" x1="0" y1="0" x2="0" y2="1"><stop offset="0" stop-color="#d6d6d6"/><stop offset="1" stop-color="#f0f0f0"/></linearGradient>
<linearGradient id="eRed" x1="0" y1="0" x2="0" y2="1"><stop offset="0" stop-color="#ff9a94"/><stop offset="1" stop-color="#e85a54"/></linearGradient>
<linearGradient id="eGray" x1="0" y1="0" x2="0" y2="1"><stop offset="0" stop-color="#e8e8e8"/><stop offset="1" stop-color="#a8a8a8"/></linearGradient>
</defs>
<g stroke="#7a7a7a" stroke-width="1"><path d="M311.5 109v19M406.5 109v19M527.5 109v19M602.5 109v19M654.5 109v19M706.5 109v19"/></g>
<!-- last edit -->
<rect x="318.5" y="111.5" width="13" height="13" fill="#dde9f5" stroke="#3a4a5a" stroke-width="1"/>
<path d="M320 113h3M321.5 113v10M320 123h3" stroke="#333" stroke-width="0.9"/>
<path d="M323 118.5l4.5-4v2.5h3q3 0 3 3v2h-3v-1.5h-3v2.5z" fill="#f4b45a" stroke="#a4600c" stroke-width="0.9"/>
<!-- back disabled -->
<rect x="342.5" y="111.5" width="13" height="13" fill="#c6cbd0" stroke="#a0a4a8" stroke-width="1"/>
<path d="M345 114h8M345 116h5M345 118h3" stroke="#9aa0a8" stroke-width="0.8"/>
<path d="M347 121.5l5-4.5v2.5h5v4h-5v2.5z" fill="#d4c4ac" stroke="#b4a48c" stroke-width="0.9"/>
<path d="M362.5 117h6l-3 3.5z" fill="#3c4c5c"/>
<!-- forward disabled -->
<rect x="375.5" y="111.5" width="13" height="13" fill="#c6cbd0" stroke="#a0a4a8" stroke-width="1"/>
<path d="M378 114h8M381 116h5M383 118h3" stroke="#9aa0a8" stroke-width="0.8"/>
<path d="M384 121.5l-5-4.5v2.5h-5v4h5v2.5z" fill="#d4c4ac" stroke="#b4a48c" stroke-width="0.9"/>
<path d="M395.5 117h6l-3 3.5z" fill="#3c4c5c"/>
<!-- find -->
<rect x="413.5" y="111.5" width="11" height="6" fill="url(#eOr)" stroke="#9a5a0c" stroke-width="1"/>
<path d="M425 121l3.5 4" stroke="#222" stroke-width="2.4" stroke-linecap="round"/>
<circle cx="422" cy="118" r="3.8" fill="#dbe8f4" stroke="#3a4a5a" stroke-width="1.3"/>
<!-- find prev -->
<rect x="436.5" y="111.5" width="11" height="6" fill="url(#eOr)" stroke="#9a5a0c" stroke-width="1"/>
<path d="M439.5 120.5l5-5v3h7v4h-7v3z" fill="#b8dcf8" stroke="#1a5aa8" stroke-width="1.1"/>
<!-- find next -->
<rect x="463.5" y="111.5" width="11" height="6" fill="url(#eOr)" stroke="#9a5a0c" stroke-width="1"/>
<path d="M472.5 120.5l-5-5v3h-7v4h7v3z" fill="#b8dcf8" stroke="#1a5aa8" stroke-width="1.1"/>
<!-- toggle highlight pressed -->
<rect x="479.5" y="108.5" width="22" height="20" rx="3" fill="url(#eBtn)" stroke="#555" stroke-width="1"/>
<rect x="482.5" y="111.5" width="11" height="6" fill="url(#eOr)" stroke="#9a5a0c" stroke-width="1"/>
<rect x="486.5" y="119.5" width="11" height="6" fill="url(#eGray)" stroke="#555" stroke-width="1"/>
<path d="M495 110l3 8M483 119l3 6" stroke="#444" stroke-width="0.8" stroke-dasharray="1 1"/>
<!-- rect select -->
<rect x="505.5" y="111.5" width="12" height="9" fill="none" stroke="#222" stroke-width="1" stroke-dasharray="1 1"/>
<path d="M515.5 118v8l2-2 2.5 2 1.5-1-2-2.5h3z" fill="#3c5c7c"/>
<!-- prev bookmark -->
<path d="M540.5 111.5h7l3 3-3 3h-7z" fill="#8ad4ec" stroke="#2a7c9c" stroke-width="0.9"/>
<path d="M539.5 113.5l-5.5 6h3.5v6h4v-6h3.5z" fill="url(#eOr)" stroke="#9a5a0c" stroke-width="1"/>
<!-- next bookmark -->
<path d="M559.5 111.5v6h-3.5l5.5 6 5.5-6h-3.5v-6z" fill="url(#eOr)" stroke="#9a5a0c" stroke-width="1"/>
<path d="M563.5 120.5h7l3 3-3 3h-7z" fill="#8ad4ec" stroke="#2a7c9c" stroke-width="0.9"/>
<!-- toggle bookmark -->
<path d="M580.5 111.5h7l3 3-3 3h-7z" fill="#8ad4ec" stroke="#2a7c9c" stroke-width="0.9"/>
<path d="M586.5 119.5h7l3 3-3 3h-7z" fill="#cfcfcf" stroke="#666" stroke-width="0.9"/>
<path d="M583 119l2.5 5M589 118v1" stroke="#333" stroke-width="0.8" stroke-dasharray="1 1"/>
<!-- shift left -->
<path d="M609.5 116.5l5-4.5v2.5h5.5v4h-5.5v2.5z" fill="#b8dcf8" stroke="#1a5aa8" stroke-width="1.1"/>
<g stroke="#333" stroke-width="1"><path d="M621 113.5h4M621 115.5h4M621 117.5h4M621 119.5h4M612 122.5h13M612 124.5h13"/></g>
<!-- shift right -->
<path d="M644 116.5l-5-4.5v2.5h-5.5v4h5.5v2.5z" fill="#b8dcf8" stroke="#1a5aa8" stroke-width="1.1"/>
<g stroke="#333" stroke-width="1"><path d="M644 113.5h4M644 115.5h4M645 117.5h3M644 119.5h4M635 122.5h13M635 124.5h13"/></g>
<!-- record -->
<circle cx="669" cy="119" r="5.6" fill="url(#eRed)" stroke="#b44a44" stroke-width="1"/>
<!-- stop -->
<rect x="686.5" y="113.5" width="11" height="11" fill="url(#eGray)" stroke="#555" stroke-width="1"/>
<!-- comment -->
<path d="M715 119l3-6M715.5 119q1.5 0 3-3t3-3M719 119l3-6" stroke="#2a9a10" stroke-width="1.6" fill="none"/>
<g stroke="#222" stroke-width="1" stroke-dasharray="1.5 0.5"><path d="M724 115.5h4M724 117.5h4M714 121.5h14M714 123.5h14M714 125.5h14"/></g>
<!-- uncomment -->
<g stroke="#111" stroke-width="1.2" stroke-dasharray="1.5 0.5"><path d="M747 115.5h4M747 117.5h4M747 119.5h4M737 121.5h14M737 123.5h14M737 125.5h14"/></g>
</svg>
<!-- tab close icons -->
<svg class="a" style="left:44px;top:92px" width="7" height="7"><use href="#close"/></svg>
<svg class="a" style="left:307px;top:91px" width="7" height="7"><use href="#close"/></svg>
<svg class="a" style="left:434px;top:91px" width="7" height="7"><use href="#close"/></svg>
<svg class="a" style="left:566px;top:91px" width="7" height="7"><use href="#close"/></svg>
<svg class="a" style="left:154px;top:639px" width="7" height="7"><use href="#close"/></svg>
<svg class="a" style="left:255px;top:727px" width="7" height="7"><use href="#close"/></svg>
<!-- minimize buttons -->
<svg class="a" style="left:186px;top:91px" width="10" height="10"><use href="#mini"/></svg>
<svg class="a" style="left:186px;top:638px" width="10" height="10"><use href="#mini"/></svg>
<svg class="a" style="left:1260px;top:726px" width="10" height="10"><use href="#mini"/></svg>
<!-- nav combo arrow -->
<svg class="a" style="left:187px;top:663px" width="9" height="5"><path d="M0 0h9l-4.5 4.5z" fill="#111"/></svg>
<!-- editor tab icons -->
<svg class="a" style="left:210px;top:87px" width="13" height="16" viewBox="0 0 13 16">
 <path d="M0.5 0.5h8.5l3.5 3.5v11.5h-12z" fill="#eef3f8" stroke="#5a6a7a" stroke-width="1"/>
 <path d="M9 0.5v3.5h3.5" fill="#fff" stroke="#5a6a7a" stroke-width="0.8"/>
 <rect x="2.5" y="5.5" width="8" height="8" fill="#fbf6e4" stroke="#4a6a8a" stroke-width="1"/>
 <path d="M4 8.5h5M4 10.5h5" stroke="#777" stroke-width="0.9"/>
</svg>
<svg class="a" style="left:322px;top:87px" width="16" height="16"><use href="#jfile"/></svg>
<svg class="a" style="left:449px;top:87px" width="16" height="16"><use href="#jfile"/></svg>
<svg class="a" style="left:457px;top:92px" width="8" height="10"><use href="#run"/></svg>
<!-- editor right buttons -->
<div class="a" style="left:1207px;top:85px;width:30px;height:15px;border:1px solid #5a636c;border-radius:0 0 3px 3px;border-top-left-radius:2px;border-top-right-radius:2px;background:linear-gradient(#fafafa 0%,#ececec 45%,#d6d6d6 55%,#e0e0e0 100%)"></div>
<div class="a" style="left:1221px;top:86px;width:1px;height:13px;background:#5a636c"></div>
<svg class="a" style="left:1211px;top:88px" width="24" height="10"><path d="M6 1v8l-4-4z" fill="#999"/><path d="M15 1v8l4-4z" fill="#999"/></svg>
<div class="a" style="left:1240px;top:85px;width:17px;height:15px;border:1px solid #3a434c;border-radius:2px 2px 3px 3px;background:linear-gradient(#fafafa 0%,#ececec 45%,#d6d6d6 55%,#e0e0e0 100%)"></div>
<svg class="a" style="left:1244px;top:90px" width="9" height="5"><path d="M0 0h9l-4.5 4.5z" fill="#2a343c"/></svg>
<div class="a" style="left:1260px;top:85px;width:16px;height:15px;border:1px solid #3a434c;border-radius:2px 0 0 3px;border-right:none;background:linear-gradient(#fafafa 0%,#ececec 45%,#d6d6d6 55%,#e0e0e0 100%)"></div>
<div class="a" style="left:1264px;top:89px;width:10px;height:6px;border:1px solid #2a343c;border-top-width:2px;background:#fff"></div>
<!-- caret marker in error stripe -->
<div class="a" style="left:1266px;top:488px;width:8px;height:1px;background:#555"></div>
<div class="a" style="left:1268px;top:487px;width:2px;height:3px;background:#555"></div>
<!-- status bar -->
<div class="a" style="left:1193px;top:966px;width:1px;height:14px;background:#a0a0a0"></div>
<div class="a" style="left:1194px;top:966px;width:1px;height:14px;background:#fff"></div>
<div class="a" style="left:1254px;top:966px;width:1px;height:14px;background:#a0a0a0"></div>
<div class="a" style="left:1255px;top:966px;width:1px;height:14px;background:#fff"></div>
<div class="t" style="left:1211px;top:968px;font-size:11px">20 | 1</div>
<div class="t" style="left:1258px;top:968px;font-size:11px">INS</div>
<!-- navigator tree -->
<svg class="a" style="left:8px;top:678px" width="9" height="9"><use href="#exp"/></svg>
<div class="a" style="left:18px;top:682px;width:5px;height:1px;background:repeating-linear-gradient(90deg,#8a8a8a 0 1px,transparent 1px 2px)"></div>
<svg class="a" style="left:23px;top:673px" width="17" height="17" viewBox="0 0 17 17">
 <rect x="1.5" y="7.5" width="9" height="8.5" fill="#a9d0f0" stroke="#3a5a7a" stroke-width="1"/>
 <path d="M8.5 1.2l5 5-5 5-5-5z" fill="#f2cc78" stroke="#b07a10" stroke-width="1"/>
 <circle cx="12.6" cy="11.6" r="3.6" fill="#f7a6a6" stroke="#b25a5a" stroke-width="0.9"/>
</svg>
<div class="t" style="left:48px;top:677px;font-size:11px;letter-spacing:-0.4px">GeneraPDFs</div>
<div class="a" style="left:31px;top:691px;width:1px;height:9px;background:repeating-linear-gradient(180deg,#8a8a8a 0 1px,transparent 1px 2px)"></div>
<div class="a" style="left:32px;top:700px;width:10px;height:1px;background:repeating-linear-gradient(90deg,#8a8a8a 0 1px,transparent 1px 2px)"></div>
<svg class="a" style="left:47px;top:694px" width="13" height="14" viewBox="0 0 13 14">
 <ellipse cx="6.5" cy="7" rx="5.5" ry="6" fill="#f6a8a8" stroke="#b45a5a" stroke-width="1"/>
 <rect x="5" y="0.8" width="3" height="12.4" fill="#fff2f2" stroke="#b45a5a" stroke-width="0.9"/>
</svg>
<div class="t" style="left:66px;top:695px;font-size:11px">main(<span style="color:#7a7a8a">String[]</span> args)</div>
<!-- nav bottom toolbar -->
<svg class="a" style="left:98px;top:926px" width="9" height="5"><path d="M0 0h8l-4 4z" fill="#9a9a9a"/></svg>
<svg class="a" style="left:0;top:924px" width="200" height="34" viewBox="0 924 200 34">
<defs>
<linearGradient id="nBtn" x1="0" y1="0" x2="0" y2="1"><stop offset="0" stop-color="#c8c8c8"/><stop offset="0.35" stop-color="#e0e0e0"/><stop offset="1" stop-color="#e8e8e8"/></linearGradient>
<linearGradient id="nLock" x1="0" y1="0" x2="0" y2="1"><stop offset="0" stop-color="#f0d090"/><stop offset="1" stop-color="#c89848"/></linearGradient>
</defs>
<g fill="url(#nBtn)" stroke="#5c5c5c" stroke-width="1">
<rect x="39.5" y="933.5" width="26" height="17" rx="3"/>
<rect x="69.5" y="933.5" width="26" height="17" rx="3"/>
<rect x="99.5" y="933.5" width="26" height="17" rx="3"/>
<rect x="129.5" y="933.5" width="26" height="17" rx="3"/>
</g>
<!-- people -->
<circle cx="19" cy="937" r="2.2" fill="#f0c8a0" stroke="#a06040" stroke-width="0.8"/>
<path d="M15 947v-7q0-1.5 2-1.5h4q2 0 2 1.5v7z" fill="#e87878" stroke="#9a3a3a" stroke-width="0.8"/>
<path d="M16.5 945h5v4h-5z" fill="#5a8ac8"/>
<circle cx="25" cy="939.5" r="2.2" fill="#f0c8a0" stroke="#a06040" stroke-width="0.8"/>
<path d="M21 949v-6q0-1.5 2-1.5h4q2 0 2 1.5v6z" fill="#e87878" stroke="#9a3a3a" stroke-width="0.8"/>
<path d="M22.5 946h5v3.5h-5z" fill="#5a8ac8"/>
<!-- square -->
<rect x="47.5" y="936.5" width="10" height="10" fill="#a9d0f0" stroke="#3a5a7a" stroke-width="1"/>
<!-- static -->
<rect x="77.5" y="935.5" width="10" height="9" fill="#a9d0f0" stroke="#3a5a7a" stroke-width="1"/>
<circle cx="78" cy="945" r="3.8" fill="#f4f6f8" stroke="#4a5058" stroke-width="0.9"/>
<text x="75.2" y="948.3" font-family="Liberation Sans" font-size="7.5" font-weight="bold" fill="#2a2f36">S</text>
<circle cx="86" cy="944.5" r="4.2" fill="#f48a8a" stroke="#b44a4a" stroke-width="0.9"/>
<!-- lock -->
<path d="M109 940v-2.5a3.5 3.5 0 0 1 7 0v2.5" fill="none" stroke="#777" stroke-width="1.6"/>
<rect x="105.5" y="940.5" width="14" height="9" fill="url(#nLock)" stroke="#8a6424" stroke-width="1"/>
<path d="M106 942.5h13M106 944.5h13M106 946.5h13" stroke="#a87c34" stroke-width="0.7"/>
<!-- sort az -->
<path d="M136 936v11M133.5 944.5l2.5 3 2.5-3" fill="none" stroke="#3a5a7a" stroke-width="1.6"/>
<text x="140" y="941" font-family="Liberation Sans" font-size="6.5" font-weight="bold" fill="#6080a0">A</text>
<text x="140" y="949" font-family="Liberation Sans" font-size="7" font-weight="bold" fill="#b07820">Z</text>
<!-- sort source -->
<path d="M166 936v11M163.5 944.5l2.5 3 2.5-3" fill="none" stroke="#3a5a7a" stroke-width="1.6"/>
<g stroke="#444" stroke-width="0.9"><path d="M171 936.5h6M171 938.5h5M171 940.5h6M171 942.5h5M171 944.5h6M171 946.5h6M171 948.5h5"/></g>
</svg>
</body></html>
